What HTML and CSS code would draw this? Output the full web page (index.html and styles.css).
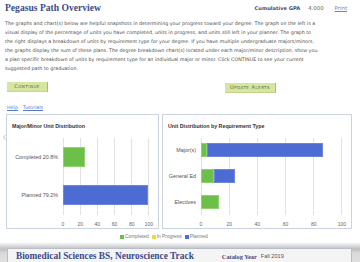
FILE: index.html
```html
<!DOCTYPE html>
<html lang="en">
<head>
<meta charset="utf-8">
<title>Pegasus Path Overview</title>
<link rel="stylesheet" href="styles.css">
</head>
<body>
<div class="page">
  <header class="top">
    <h1 class="title">Pegasus Path Overview</h1>
    <div class="gpa">
      <span class="gpa-label">Cumulative GPA</span>
      <span class="gpa-val">4.000</span>
      <a class="print" href="#">Print</a>
    </div>
  </header>

  <p class="intro">The graphs and chart(s) below are helpful snapshots in determining your progress toward your degree. The graph on the left is a<br>visual display of the percentage of units you have completed, units in progress, and units still left in your planner. The graph to<br>the right displays a breakdown of units by requirement type for your degree. If you have multiple undergraduate majors/minors,<br>the graphs display the sum of these plans. The degree breakdown chart(s) located under each major/minor description, show you<br>a plan specific breakdown of units by requirement type for an individual major or minor. Click CONTINUE to see your current<br>suggested path to graduation.</p>

  <div class="btnrow">
    <span class="btn">Continue</span>
    <span class="btn btn-alerts">Update Alerts</span>
  </div>

  <nav class="links"><a href="#">Help</a><a href="#">Tutorials</a></nav>

  <div class="panels">
    <span class="chev">&#8249;</span>
    <section class="panel p-left">
      <h2 class="ptitle">Major/Minor Unit Distribution</h2>
      <div class="chart">
        <div class="labels">
          <span class="lab">Completed 20.8%</span>
          <span class="lab">Planned 79.2%</span>
        </div>
        <div class="plot">
          <div class="row"><div class="seg g" style="width:25.6%"></div></div>
          <div class="row"><div class="seg b" style="width:98.8%"></div></div>
        </div>
      </div>
      <div class="axis"><span>0</span><span>20</span><span>40</span><span>60</span><span>80</span><span>100</span></div>
    </section>

    <section class="panel p-right">
      <h2 class="ptitle">Unit Distribution by Requirement Type</h2>
      <div class="chart">
        <div class="labels">
          <span class="lab">Major(s)</span>
          <span class="lab">General Ed</span>
          <span class="lab">Electives</span>
        </div>
        <div class="plot">
          <div class="row"><div class="seg g" style="width:4.3%"></div><div class="seg b" style="width:82.3%"></div></div>
          <div class="row"><div class="seg g" style="width:8.9%"></div><div class="seg b" style="width:14.9%"></div></div>
          <div class="row"><div class="seg g" style="width:12.8%"></div></div>
        </div>
      </div>
      <div class="axis"><span>0</span><span>20</span><span>40</span><span>60</span><span>80</span><span>100</span></div>
    </section>
  </div>

  <div class="legend">
    <span class="key"><i class="sw g"></i>Completed</span>
    <span class="key"><i class="sw y"></i>In Progress</span>
    <span class="key"><i class="sw b"></i>Planned</span>
  </div>
</div>

<div class="foot">
  <div class="prog">
    <h2 class="prog-title">Biomedical Sciences BS, Neuroscience Track</h2>
    <span class="cat-label">Catalog Year</span>
    <span class="cat-val">Fall 2019</span>
  </div>
</div>
</body>
</html>
```

FILE: styles.css
```css
html, body {
  margin: 0;
  padding: 0;
  background: #ffffff;
  overflow: hidden;
}

body {
  width: 360px;
  height: 262px;
  font-family: "DejaVu Sans", Verdana, sans-serif;
  color: #555;
}

.page {
  padding: 0 5px 0 5px;
}

.top {
  display: flex;
  justify-content: space-between;
  align-items: center;
  padding-top: 2px;
  height: 12px;
}

.title {
  margin: 0;
  font-family: "Liberation Serif", "Times New Roman", serif;
  font-weight: bold;
  font-size: 9.6px;
  line-height: 12px;
  color: #3c4b8a;
}

.gpa {
  display: flex;
  align-items: baseline;
  padding-right: 8px;
}

.gpa-label {
  font-weight: bold;
  color: #3e4c80;
  font-size: 5.1px;
}

.gpa-val {
  margin-left: 8px;
  color: #666;
  font-size: 5.4px;
}

.print {
  margin-left: 11px;
  color: #6b86c6;
  font-size: 5.4px;
  text-decoration: underline;
}

.intro {
  margin: 4.5px 0 0 0;
  font-size: 4.8px;
  line-height: 9px;
  white-space: nowrap;
  color: #4d4d4d;
}

.btnrow {
  display: flex;
  margin-top: 9px;
  padding-left: 2px;
  align-items: flex-start;
}

.btn {
  display: flex;
  align-items: center;
  justify-content: center;
  width: 41px;
  height: 10px;
  background: #d4e6a2;
  border-right: 1px solid #a8bd6e;
  border-bottom: 1px solid #c2d48d;
  font-size: 5px;
  font-variant: small-caps;
  letter-spacing: 0.5px;
  color: #5c6a40;
  box-sizing: border-box;
}

.btn-alerts {
  width: 51px;
  margin-left: 177px;
  margin-top: 1px;
}

.links {
  display: flex;
  gap: 5px;
  margin-top: 11px;
  padding-left: 2px;
  height: 8px;
  align-items: center;
}

.links a {
  font-size: 4.8px;
  color: #5a78c4;
  text-decoration: underline;
}

.panels {
  position: relative;
  display: flex;
  gap: 3px;
  margin-top: 2px;
  padding-left: 1px;
}

.chev {
  position: absolute;
  left: -3px;
  top: 17px;
  font-size: 12px;
  line-height: 12px;
  color: #cfcfcf;
  font-family: "DejaVu Sans", sans-serif;
}

.panel {
  border: 1px solid #cbd3e2;
  height: 115px;
  box-sizing: border-box;
  display: flex;
  flex-direction: column;
}

.p-left { width: 153px; }
.p-right { width: 190px; }

.ptitle {
  margin: 0;
  padding: 7px 0 0 5px;
  font-family: "Liberation Sans", Arial, sans-serif;
  font-weight: bold;
  font-size: 5.3px;
  line-height: 8px;
  color: #333;
}

.chart {
  display: flex;
  margin-top: 8px;
  height: 78px;
}

.labels {
  display: flex;
  flex-direction: column;
  align-items: flex-end;
}

.lab {
  flex: 1;
  display: flex;
  align-items: center;
  font-family: "Liberation Sans", Arial, sans-serif;
  font-size: 5.4px;
  color: #555;
  white-space: nowrap;
}

.plot {
  position: relative;
  display: flex;
  flex-direction: column;
  margin-left: 5px;
}

.row {
  flex: 1;
  display: flex;
  align-items: center;
}

.seg {
  box-sizing: border-box;
}

.seg.g { background: #6cc04a; border: 1px solid #8fd270; }
.seg.b { background: #4e6bd4; border: 1px solid #6c85de; }

.p-left .labels { width: 51px; }
.p-left .plot {
  width: 86px;
  background: repeating-linear-gradient(to right, #e2e2e2 0, #e2e2e2 1px, transparent 1px, transparent 17px);
}
.p-left .seg { height: 20px; }

.p-right .labels { width: 33px; }
.p-right .plot {
  width: 141px;
  background: repeating-linear-gradient(to right, #e2e2e2 0, #e2e2e2 1px, transparent 1px, transparent 28px);
}
.p-right .seg { height: 14px; }

.axis {
  display: flex;
  justify-content: space-between;
  margin-top: 5px;
  height: 8px;
  align-items: center;
  font-family: "Liberation Sans", Arial, sans-serif;
  font-size: 5px;
  color: #666;
}

.axis span {
  width: 0;
  display: flex;
  justify-content: center;
  white-space: nowrap;
}

.p-left .axis { margin-left: 56px; width: 86px; }
.p-right .axis { margin-left: 38px; width: 141px; }

.legend {
  display: flex;
  gap: 3px;
  padding-left: 115px;
  margin-top: 5px;
  height: 6px;
  align-items: center;
  font-family: "Liberation Sans", Arial, sans-serif;
  font-size: 4.9px;
  color: #777;
}

.key {
  display: flex;
  align-items: center;
  gap: 1px;
}

.sw {
  display: inline-block;
  width: 4px;
  height: 4px;
}

.sw.g { background: #6cc04a; }
.sw.y { background: #e8dc3c; }
.sw.b { background: #4e6bd4; }

.foot {
  margin-top: 2px;
  padding-top: 6px;
  height: 24px;
  background: linear-gradient(to bottom, #ffffff 0, #bfbfbf 7px, #d9d9d9 11px, #e6e6e6 100%);
}

.prog {
  display: flex;
  align-items: center;
  margin: 0 8px 0 7px;
  height: 24px;
  padding: 0 0 8px 8px;
  box-sizing: border-box;
  border: 1px solid #b7bdcb;
  border-bottom: none;
  background: #f4f4f4;
}

.prog-title {
  margin: 0;
  font-family: "Liberation Serif", "Times New Roman", serif;
  font-weight: bold;
  font-size: 9.4px;
  color: #3c4b8a;
}

.cat-label {
  margin-left: 28px;
  font-family: "Liberation Serif", "Times New Roman", serif;
  font-weight: bold;
  font-size: 6.3px;
  color: #3c4b8a;
}

.cat-val {
  margin-left: 4px;
  font-family: "Liberation Sans", Arial, sans-serif;
  font-size: 5.6px;
  color: #555;
}
```
